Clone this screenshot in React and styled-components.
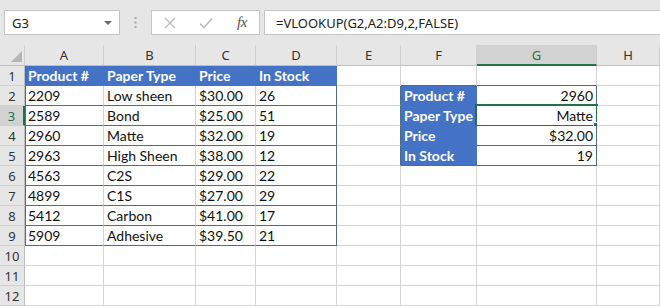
import React from "react";
import styled, { createGlobalStyle } from "styled-components";

const GREEN = "#217346";
const BLUE = "#4472c4";
const SLATE = "#4e6d80";
const GRID = "#d4d4d4";

const GlobalStyle = createGlobalStyle`
  html, body {
    margin: 0;
    padding: 0;
    background: #ffffff;
    overflow: hidden;
  }
`;

const Page = styled.div`
  width: 660px;
  height: 306px;
  overflow: hidden;
  display: flex;
  flex-direction: column;
  background: #fff;
`;

const Toolbar = styled.div`
  height: 45px;
  flex: none;
  box-sizing: border-box;
  background: #e6e6e6;
  display: flex;
  align-items: flex-start;
  padding: 10px 0 0 4px;
  font-family: "Noto Sans", "Open Sans", sans-serif;
`;

const NameBox = styled.div`
  width: 116px;
  height: 25px;
  box-sizing: border-box;
  background: #fff;
  border: 1px solid #c6c6c6;
  display: flex;
  align-items: center;
  justify-content: space-between;
  padding: 0 7px 0 7px;
  font-size: 13px;
  color: #222;
`;

const Caret = styled.span`
  width: 0;
  height: 0;
  border-left: 4px solid transparent;
  border-right: 4px solid transparent;
  border-top: 4px solid #6b6b6b;
`;

const Grip = styled.div`
  width: 31px;
  height: 25px;
  display: flex;
  align-items: center;
  justify-content: center;
`;

const FnBox = styled.div`
  width: 109px;
  height: 25px;
  box-sizing: border-box;
  background: #fff;
  border: 1px solid #c6c6c6;
  display: flex;
  align-items: center;
  padding-left: 12px;
  gap: 23px;
`;

const Fx = styled.span`
  font-family: "Liberation Serif", serif;
  font-style: italic;
  font-size: 15px;
  color: #555;
  letter-spacing: -0.5px;
  margin-left: 1px;
`;

const FormulaBar = styled.div`
  flex: 1;
  height: 25px;
  margin-left: 4px;
  box-sizing: border-box;
  background: #fff;
  border: 1px solid #c6c6c6;
  border-right: none;
  display: flex;
  align-items: center;
  padding-left: 11px;
  font-size: 13px;
  color: #222;
`;

const Sheet = styled.div`
  display: grid;
  grid-template-columns: 25px 79px 92px 60px 81px 64px 76px 120px 63px;
  grid-template-rows: 21px repeat(12, 20px);
`;

const Corner = styled.div`
  box-sizing: border-box;
  background: #e6e6e6;
  border-right: 1px solid #cfcfcf;
  border-bottom: 1px solid #bfbfbf;
  display: flex;
  align-items: flex-end;
  justify-content: flex-end;
  padding: 0 2px 3px 0;
`;

const ColHead = styled.div`
  box-sizing: border-box;
  background: ${(p) => (p.$active ? "#d2d2d2" : "#e6e6e6")};
  border-right: 1px solid #cfcfcf;
  border-bottom: ${(p) => (p.$active ? `2px solid ${GREEN}` : "1px solid #bfbfbf")};
  display: flex;
  align-items: center;
  justify-content: center;
  font-family: "Noto Sans", "Open Sans", sans-serif;
  font-size: 13px;
  color: ${(p) => (p.$active ? GREEN : "#333")};
  padding-top: ${(p) => (p.$active ? "1px" : "0")};
`;

const RowHead = styled.div`
  box-sizing: border-box;
  background: ${(p) => (p.$active ? "#d2d2d2" : "#e6e6e6")};
  border-right: ${(p) => (p.$active ? `2px solid ${GREEN}` : "1px solid #bfbfbf")};
  border-bottom: 1px solid #d0d0d0;
  display: flex;
  align-items: center;
  justify-content: center;
  font-family: "Noto Sans", "Open Sans", sans-serif;
  font-size: 13px;
  color: ${(p) => (p.$active ? GREEN : "#333")};
`;

const Cell = styled.div`
  position: relative;
  box-sizing: border-box;
  background: ${(p) => p.$bg || "#fff"};
  color: ${(p) => (p.$bg ? "#fff" : "#111")};
  font-weight: ${(p) => (p.$bold ? 700 : 400)};
  border-right: 1px solid ${(p) => p.$rb || GRID};
  border-bottom: 1px solid ${(p) => p.$bb || GRID};
  box-shadow: ${(p) => (p.$lb ? `inset 1px 0 0 ${p.$lb}` : "none")};
  display: flex;
  align-items: flex-end;
  justify-content: ${(p) => (p.$right ? "flex-end" : "flex-start")};
  padding: 0 3px 0 3px;
  font-family: "Lato", "Liberation Sans", sans-serif;
  font-size: 14px;
  line-height: 18px;
  white-space: nowrap;
  overflow: visible;
`;

const Selection = styled.div`
  position: absolute;
  left: -2px;
  top: -2px;
  right: -2px;
  bottom: -2px;
  border: 2px solid ${GREEN};
  pointer-events: none;
`;

const Handle = styled.div`
  position: absolute;
  right: -4px;
  bottom: -4px;
  width: 5px;
  height: 5px;
  background: ${GREEN};
  border: 1px solid #fff;
`;

const COLS = ["A", "B", "C", "D", "E", "F", "G", "H"];

const table = [
  ["Product #", "Paper Type", "Price", "In Stock"],
  ["2209", "Low sheen", "$30.00", "26"],
  ["2589", "Bond", "$25.00", "51"],
  ["2960", "Matte", "$32.00", "19"],
  ["2963", "High Sheen", "$38.00", "12"],
  ["4563", "C2S", "$29.00", "22"],
  ["4899", "C1S", "$27.00", "29"],
  ["5412", "Carbon", "$41.00", "17"],
  ["5909", "Adhesive", "$39.50", "21"],
];

const lookup = [
  ["Product #", "2960"],
  ["Paper Type", "Matte"],
  ["Price", "$32.00"],
  ["In Stock", "19"],
];

// works out text and borders for one sheet cell (r is 1-based, c is 0-based)
function cellFor(r, c) {
  const p = { text: "" };
  if (c <= 3 && r <= 9) {
    p.text = table[r - 1][c];
    if (r === 1) {
      p.$bg = BLUE;
      p.$bold = true;
      p.$bb = BLUE;
      p.$rb = BLUE;
    } else {
      p.$bb = SLATE;
      if (c === 3) p.$rb = SLATE;
    }
    if (c === 0) p.$lb = SLATE;
  }
  if (c === 4 && r >= 2 && r <= 5) p.$rb = SLATE;
  if ((c === 5 || c === 6) && r === 1) p.$bb = SLATE;
  if (c === 5 && r >= 2 && r <= 5) {
    p.text = lookup[r - 2][0];
    p.$bg = BLUE;
    p.$bold = true;
    p.$rb = BLUE;
    p.$bb = r === 5 ? SLATE : BLUE;
  }
  if (c === 6 && r >= 2 && r <= 5) {
    p.text = lookup[r - 2][1];
    p.$right = true;
    p.$bb = SLATE;
    p.$rb = SLATE;
  }
  return p;
}

function ToolbarRow() {
  return (
    <Toolbar>
      <NameBox>
        <span>G3</span>
        <Caret />
      </NameBox>
      <Grip>
        <svg width="3" height="11" viewBox="0 0 3 11">
          <rect x="0.5" y="0" width="2" height="2" fill="#a8a8a8" />
          <rect x="0.5" y="4.5" width="2" height="2" fill="#a8a8a8" />
          <rect x="0.5" y="9" width="2" height="2" fill="#a8a8a8" />
        </svg>
      </Grip>
      <FnBox>
        <svg width="12" height="12" viewBox="0 0 12 12">
          <path d="M1 1 L11 11 M11 1 L1 11" stroke="#bdbdbd" strokeWidth="1.4" fill="none" />
        </svg>
        <svg width="14" height="12" viewBox="0 0 14 12">
          <path d="M1 6.5 L5 10.5 L13 1.5" stroke="#bdbdbd" strokeWidth="1.6" fill="none" />
        </svg>
        <Fx>fx</Fx>
      </FnBox>
      <FormulaBar>=VLOOKUP(G2,A2:D9,2,FALSE)</FormulaBar>
    </Toolbar>
  );
}

export default function App() {
  const rows = Array.from({ length: 12 }, (_, i) => i + 1);
  return (
    <>
      <GlobalStyle />
      <Page>
        <ToolbarRow />
        <Sheet>
          <Corner>
            <svg width="11" height="11" viewBox="0 0 11 11">
              <path d="M11 0 L11 11 L0 11 Z" fill="#b5b5b5" />
            </svg>
          </Corner>
          {COLS.map((col) => (
            <ColHead key={col} $active={col === "G"}>
              {col}
            </ColHead>
          ))}
          {rows.map((r) => (
            <React.Fragment key={r}>
              <RowHead $active={r === 3}>{r}</RowHead>
              {COLS.map((col, c) => {
                const { text, ...props } = cellFor(r, c);
                const selected = r === 3 && c === 6;
                return (
                  <Cell key={col} {...props}>
                    {text}
                    {selected && (
                      <Selection>
                        <Handle />
                      </Selection>
                    )}
                  </Cell>
                );
              })}
            </React.Fragment>
          ))}
        </Sheet>
      </Page>
    </>
  );
}
